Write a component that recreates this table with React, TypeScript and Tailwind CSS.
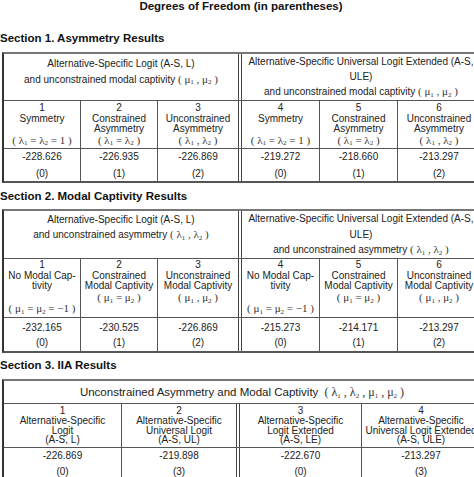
import React from 'react';

function Sub({ n }: { n: string }) {
  return <sub className="text-[7px]">{n}</sub>;
}

function Formula({ children }: { children: React.ReactNode }) {
  return (
    <span className="font-['Liberation_Serif','DejaVu_Serif',serif] text-[11px] text-[#333]">
      {children}
    </span>
  );
}

const L1 = <>λ<Sub n="1" /></>;
const L2 = <>λ<Sub n="2" /></>;
const M1 = <>μ<Sub n="1" /></>;
const M2 = <>μ<Sub n="2" /></>;

type CellProps = {
  lines: React.ReactNode[];
  width: string;
  edge?: 'single' | 'double' | 'none';
  lineClass: string;
  padClass: string;
};

function Cell({ lines, width, edge = 'single', lineClass, padClass }: CellProps) {
  const edgeClass =
    edge === 'double'
      ? 'border-r-4 border-double border-[#444]'
      : edge === 'single'
        ? 'border-r border-[#555]'
        : '';
  return (
    <div className={`${width} ${edgeClass} ${padClass} shrink-0 text-center`}>
      {lines.map((l, i) => (
        <div key={i} className={`${lineClass} whitespace-nowrap`}>
          {l === '' ? '\u00a0' : l}
        </div>
      ))}
    </div>
  );
}

function Heading({ children, className }: { children: React.ReactNode; className: string }) {
  return (
    <div className={`${className} h-[14px] text-[11.5px] font-bold leading-[14px] text-[#111]`}>
      {children}
    </div>
  );
}

const sixCols = ['w-[77px]', 'w-[77px]', 'w-[84px]', 'w-[78px]', 'w-[78px]', 'w-[82px]'];
const sixEdges: ('single' | 'double' | 'none')[] = ['single', 'single', 'double', 'single', 'single', 'none'];
const fourCols = ['w-[118px]', 'w-[118px]', 'w-[122px]', 'w-[118px]'];
const fourEdges: ('single' | 'double' | 'none')[] = ['single', 'double', 'single', 'none'];

const asymLabels: React.ReactNode[][] = [
  ['1', 'Symmetry', '', <Formula>( {L1} = {L2} = 1 )</Formula>],
  ['2', 'Constrained', 'Asymmetry', <Formula>( {L1} = {L2} )</Formula>],
  ['3', 'Unconstrained', 'Asymmetry', <Formula>( {L1} , {L2} )</Formula>],
  ['4', 'Symmetry', '', <Formula>( {L1} = {L2} = 1 )</Formula>],
  ['5', 'Constrained', 'Asymmetry', <Formula>( {L1} = {L2} )</Formula>],
  ['6', 'Unconstrained', 'Asymmetry', <Formula>( {L1} , {L2} )</Formula>],
];

const captLabels: React.ReactNode[][] = [
  ['1', 'No Modal Cap-', 'tivity', '', <Formula>( {M1} = {M2} = −1 )</Formula>],
  ['2', 'Constrained', 'Modal Captivity', <Formula>( {M1} = {M2} )</Formula>],
  ['3', 'Unconstrained', 'Modal Captivity', <Formula>( {M1} , {M2} )</Formula>],
  ['4', 'No Modal Cap-', 'tivity', '', <Formula>( {M1} = {M2} = −1 )</Formula>],
  ['5', 'Constrained', 'Modal Captivity', <Formula>( {M1} = {M2} )</Formula>],
  ['6', 'Unconstrained', 'Modal Captivity', <Formula>( {M1} , {M2} )</Formula>],
];

const iiaLabels: React.ReactNode[][] = [
  ['1', 'Alternative-Specific', 'Logit', '(A-S, L)'],
  ['2', 'Alternative-Specific', 'Universal Logit', '(A-S, UL)'],
  ['3', 'Alternative-Specific', 'Logit Extended', '(A-S, LE)'],
  ['4', 'Alternative-Specific', 'Universal Logit Extended', '(A-S, ULE)'],
];

const asymValues = [
  ['-228.626', '(0)'],
  ['-226.935', '(1)'],
  ['-226.869', '(2)'],
  ['-219.272', '(0)'],
  ['-218.660', '(1)'],
  ['-213.297', '(2)'],
];

const captValues = [
  ['-232.165', '(0)'],
  ['-230.525', '(1)'],
  ['-226.869', '(2)'],
  ['-215.273', '(0)'],
  ['-214.171', '(1)'],
  ['-213.297', '(2)'],
];

const iiaValues = [
  ['-226.869', '(0)'],
  ['-219.898', '(3)'],
  ['-222.670', '(0)'],
  ['-213.297', '(3)'],
];

const tableBox =
  'ml-[2px] w-[478px] border-t-2 border-l-2 border-t-[#777] border-l-[#333]';

export default function App() {
  return (
    <div className="h-[477px] w-[474px] overflow-hidden bg-white font-['Liberation_Sans',Arial,sans-serif] text-[10px] text-[#222]">
      <div className="w-[482px]">
        <Heading className="-mt-[1px] text-center">Degrees of Freedom (in parentheses)</Heading>

        {/* Section 1 */}
        <Heading className="mt-[18px]">Section 1. Asymmetry Results</Heading>
        <div className={`${tableBox} mt-[7px] border-b-2 border-b-[#555]`}>
          <div className="flex h-[47px] border-b border-[#555]">
            <div className="w-[238px] shrink-0 border-r-4 border-double border-[#444] pt-[2px] text-center leading-[15.5px]">
              <div>Alternative-Specific Logit (A-S, L)</div>
              <div>
                and unconstrained modal captivity <Formula>( {M1} , {M2} )</Formula>
              </div>
            </div>
            <div className="flex-1 text-center leading-[15px]">
              <div>Alternative-Specific Universal Logit Extended (A-S,</div>
              <div>ULE)</div>
              <div>
                and unconstrained modal captivity <Formula>( {M1} , {M2} )</Formula>
              </div>
            </div>
          </div>
          <div className="flex h-[48px] border-b border-[#555]">
            {asymLabels.map((lines, i) => (
              <Cell
                key={i}
                lines={lines}
                width={sixCols[i]}
                edge={sixEdges[i]}
                lineClass="h-[10.5px] leading-[10.5px]"
                padClass="pt-[2px]"
              />
            ))}
          </div>
          <div className="flex h-[32px]">
            {asymValues.map((lines, i) => (
              <Cell
                key={i}
                lines={lines}
                width={sixCols[i]}
                edge={sixEdges[i]}
                lineClass="leading-[16.5px]"
                padClass="pt-0"
              />
            ))}
          </div>
        </div>

        {/* Section 2 */}
        <Heading className="mt-[6px]">Section 2. Modal Captivity Results</Heading>
        <div className={`${tableBox} mt-[6px] border-b-2 border-b-[#555]`}>
          <div className="flex h-[48px] border-b border-[#555]">
            <div className="w-[238px] shrink-0 border-r-4 border-double border-[#444] pt-[1px] text-center leading-[15px]">
              <div>Alternative-Specific Logit (A-S, L)</div>
              <div>
                and unconstrained asymmetry <Formula>( {L1} , {L2} )</Formula>
              </div>
            </div>
            <div className="flex-1 text-center leading-[15.5px]">
              <div>Alternative-Specific Universal Logit Extended (A-S,</div>
              <div>ULE)</div>
              <div>
                and unconstrained asymmetry <Formula>( {L1} , {L2} )</Formula>
              </div>
            </div>
          </div>
          <div className="flex h-[59px] border-b border-[#555]">
            {captLabels.map((lines, i) => (
              <Cell
                key={i}
                lines={lines}
                width={sixCols[i]}
                edge={sixEdges[i]}
                lineClass="h-[10.7px] leading-[10.7px]"
                padClass="pt-[1px]"
              />
            ))}
          </div>
          <div className="flex h-[33px]">
            {captValues.map((lines, i) => (
              <Cell
                key={i}
                lines={lines}
                width={sixCols[i]}
                edge={sixEdges[i]}
                lineClass="leading-[15px]"
                padClass="pt-[2px]"
              />
            ))}
          </div>
        </div>

        {/* Section 3 */}
        <Heading className="mt-[5px]">Section 3. IIA Results</Heading>
        <div className={`${tableBox} mt-[7px]`}>
          <div className="flex h-[23px] items-center justify-center border-b border-[#555] text-[11.5px]">
            <span>
              Unconstrained Asymmetry and Modal Captivity{' '}
              <Formula>
                <span className="text-[12px]">
                  &nbsp;( {L1} , {L2} , {M1} , {M2} )
                </span>
              </Formula>
            </span>
          </div>
          <div className="flex h-[44px] border-b border-[#555]">
            {iiaLabels.map((lines, i) => (
              <Cell
                key={i}
                lines={lines}
                width={fourCols[i]}
                edge={fourEdges[i]}
                lineClass="h-[9.8px] leading-[9.8px]"
                padClass="pt-[2px]"
              />
            ))}
          </div>
          <div className="flex h-[40px]">
            {iiaValues.map((lines, i) => (
              <Cell
                key={i}
                lines={lines}
                width={fourCols[i]}
                edge={fourEdges[i]}
                lineClass="leading-[16px]"
                padClass="pt-0"
              />
            ))}
          </div>
        </div>
      </div>
    </div>
  );
}
